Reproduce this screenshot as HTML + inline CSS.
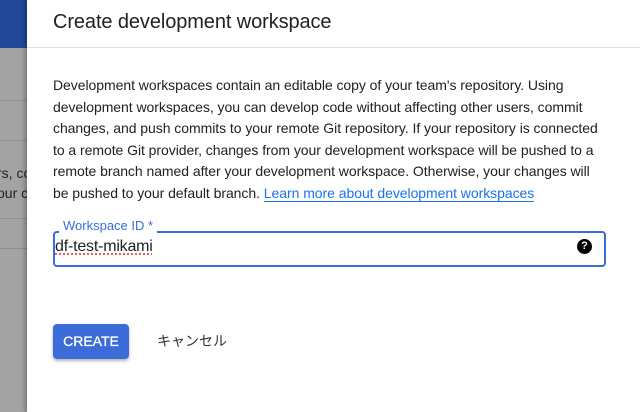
<!DOCTYPE html>
<html><head><meta charset="utf-8"><style>
body{margin:0;width:640px;height:412px;overflow:hidden;position:relative;font-family:"Liberation Sans","Noto Sans CJK JP",sans-serif;background:#fff}
.left{position:absolute;left:0;top:0;width:27px;height:412px;background:#a3a3a3;overflow:hidden}
.left .bar{position:absolute;top:0;left:0;width:27px;height:48px;background:#21499a}
.left .ln{position:absolute;left:0;width:27px;height:1px;background:#8e8e8e}
.left .t{position:absolute;left:-3px;font-size:14px;color:#222;white-space:nowrap}
.dlg{position:absolute;left:27px;top:0;width:613px;height:412px;background:#fff;box-shadow:-2px 0 4px rgba(0,0,0,.3)}
.title{position:absolute;left:26px;top:11px;font-size:20px;color:#202124;letter-spacing:-0.1px}
.div{position:absolute;left:0;top:47px;width:613px;height:1px;background:#e0e0e0}
.p{position:absolute;left:26px;top:75px;width:590px;font-size:14px;line-height:21.6px;color:#202124;letter-spacing:-0.05px;white-space:nowrap}
.p a{color:#1a73e8;text-decoration:none;border-bottom:1px solid #1a73e8}
.inp{position:absolute;left:26px;top:231px;width:549px;height:32px;border:2px solid #3b6cd8;border-radius:4px}
.lab{position:absolute;left:32px;top:218px;background:#fff;padding:0 4px;font-size:13px;color:#3b6cd8}
.val{position:absolute;left:28px;top:238px;font-size:16px;color:#202124;text-decoration:underline dotted #e33;text-underline-offset:3px;letter-spacing:-0.2px}
.q{position:absolute;left:550px;top:239px;width:15px;height:15px;border-radius:50%;background:#000;color:#fff;font-size:11px;font-weight:bold;text-align:center;line-height:15px}
.btn{position:absolute;left:26px;top:324px;width:76px;height:35px;background:#3b6cd8;border-radius:4px;box-shadow:0 2px 3px rgba(0,0,0,.3);color:#fff;font-size:14px;text-align:center;line-height:35px;-webkit-text-stroke:0.3px #fff}
.cancel{position:absolute;left:130px;top:331px;font-size:14px;color:#333}
</style></head><body>
<div class="left"><div class="bar"></div>
<div class="ln" style="top:100px"></div><div class="ln" style="top:140px"></div>
<div class="ln" style="top:218px"></div><div class="ln" style="top:248px"></div>
<div class="t" style="top:165px">rs, co</div><div class="t" style="top:185px">our cl</div></div>
<div class="dlg">
<div class="title">Create development workspace</div>
<div class="div"></div>
<div class="p">Development workspaces contain an editable copy of your team's repository. Using<br>development workspaces, you can develop code without affecting other users, commit<br>changes, and push commits to your remote Git repository. If your repository is connected<br>to a remote Git provider, changes from your development workspace will be pushed to a<br>remote branch named after your development workspace. Otherwise, your changes will<br>be pushed to your default branch. <a>Learn more about development workspaces</a></div>
<div class="inp"></div>
<div class="lab">Workspace ID *</div>
<div class="val">df-test-mikami</div>
<div class="q">?</div>
<div class="btn">CREATE</div>
<div class="cancel">キャンセル</div>
</div>
</body></html>
